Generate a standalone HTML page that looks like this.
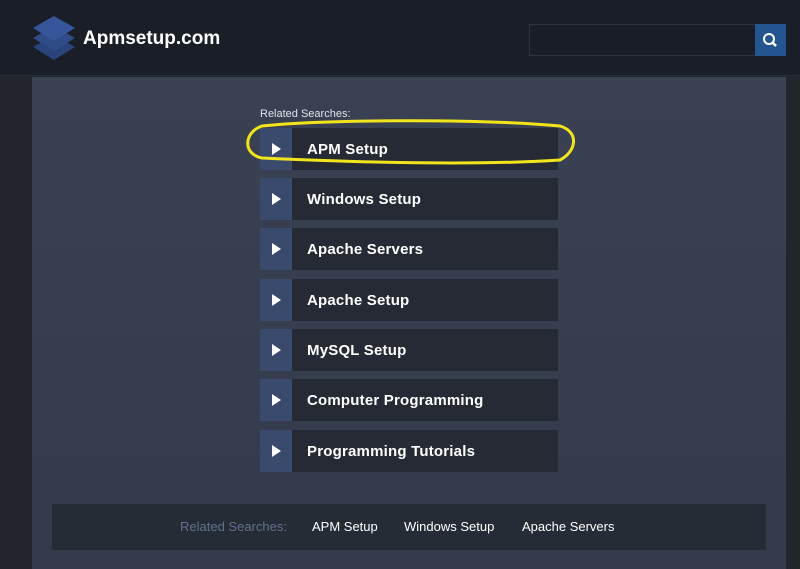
<!DOCTYPE html>
<html><head><style>
*{margin:0;padding:0;box-sizing:border-box}
body{width:800px;height:569px;overflow:hidden;background:#22252c;font-family:"Liberation Sans",sans-serif;position:relative}
.hdr{position:absolute;left:0;top:0;width:800px;height:76px;background:#191e27;border-bottom:1px solid #2a303b}
.logo{position:absolute;left:83px;top:28px;color:#fff;font-weight:bold;font-size:19px}
.search{position:absolute;left:529px;top:24px;width:227px;height:32px;border:1px solid #2e3442;background:#181d26}
.sbtn{position:absolute;left:755px;top:24px;width:31px;height:32px;background:#255591}
.main{position:absolute;left:32px;top:77px;width:754px;height:492px;background:linear-gradient(#394153,#353d4e 60%,#343b4b)}
.rel{position:absolute;left:260px;top:108px;color:#dfe3ea;font-size:11px}
.item{position:absolute;left:260px;width:298px;height:42px;background:#252a34}
.item .ic{position:absolute;left:0;top:0;width:32px;height:42px;background:#3a4a6d}
.item .ic:after{content:"";position:absolute;left:12px;top:15px;border-left:9px solid #fff;border-top:6px solid transparent;border-bottom:6px solid transparent}
.item span{position:absolute;left:47px;top:13px;color:#fff;font-weight:bold;font-size:15px;letter-spacing:0.2px}
.foot{position:absolute;left:52px;top:504px;width:714px;height:46px;background:#262c36;font-size:13px;color:#fff}
.foot span{position:absolute;top:15px}
</style></head><body>
<div class="hdr"></div>
<svg style="position:absolute;left:31px;top:14px" width="46" height="48" viewBox="0 0 46 48">
<path d="M2 33 L23 21 L44 33 L23 46 Z" fill="#2a437a"/>
<path d="M2 24 L23 12 L44 24 L23 37 Z" fill="#2f4c88"/>
<path d="M2 14 L23 2 L44 14 L23 27 Z" fill="#36559a"/>
</svg>
<div class="logo">Apmsetup.com</div>
<div class="search"></div>
<div class="sbtn"><svg width="31" height="32"><circle cx="14" cy="15" r="5" stroke="#fff" stroke-width="2" fill="none"/><line x1="18" y1="19" x2="21" y2="22" stroke="#fff" stroke-width="2.5"/></svg></div>
<div class="main"></div>
<div class="rel">Related Searches:</div>
<div class="item" style="top:128px"><div class="ic"></div><span>APM Setup</span></div>
<div class="item" style="top:178px"><div class="ic"></div><span>Windows Setup</span></div>
<div class="item" style="top:228px"><div class="ic"></div><span>Apache Servers</span></div>
<div class="item" style="top:279px"><div class="ic"></div><span>Apache Setup</span></div>
<div class="item" style="top:329px"><div class="ic"></div><span>MySQL Setup</span></div>
<div class="item" style="top:379px"><div class="ic"></div><span>Computer Programming</span></div>
<div class="item" style="top:430px"><div class="ic"></div><span>Programming Tutorials</span></div>
<svg style="position:absolute;left:0;top:0" width="800" height="569"><path d="M262 126 C320 120 470 118 560 126 C580 132 576 152 560 160 C470 166 350 162 262 158 C242 154 244 132 262 126 Z" fill="none" stroke="#f2e51c" stroke-width="3"/></svg>
<div class="foot"><span style="left:128px;color:#62708e">Related Searches:</span><span style="left:260px">APM Setup</span><span style="left:352px">Windows Setup</span><span style="left:470px">Apache Servers</span></div>
</body></html>
